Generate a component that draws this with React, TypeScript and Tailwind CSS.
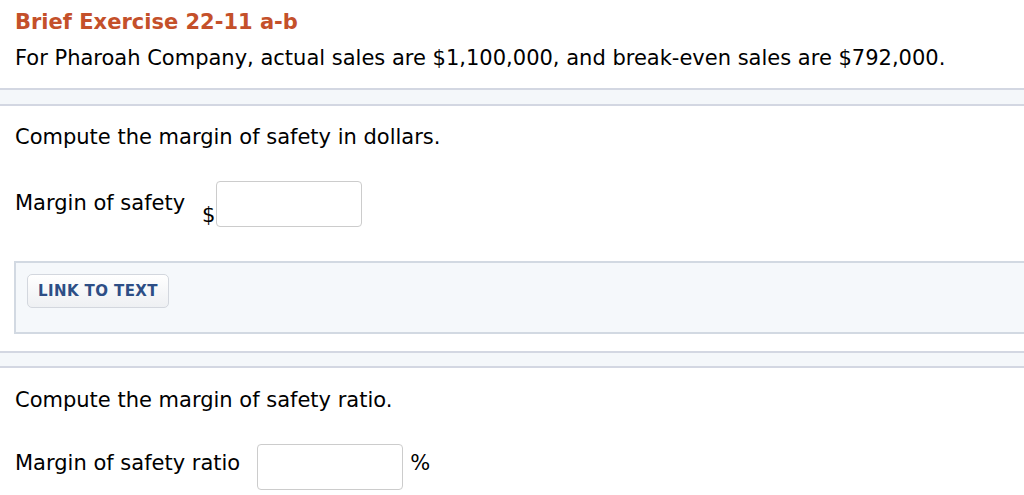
export default function App() {
  return (
    <div className="w-[1024px] h-[495px] overflow-hidden bg-white text-[21px] text-black" style={{ fontFamily: '"DejaVu Sans", Verdana, sans-serif' }}>
      <div className="px-[15px] pt-[9px]">
        <h1 className="font-bold text-[#c4502a] text-[21px] leading-[26px]">Brief Exercise 22-11 a-b</h1>
        <p className="mt-[10px] leading-[26px]">For Pharoah Company, actual sales are $1,100,000, and break-even sales are $792,000.</p>
      </div>
      <div className="mt-[17px] h-[18px] bg-[#f4f7fa] border-t-2 border-b-2 border-[#d3d7e2]"></div>
      <div className="px-[15px]">
        <p className="mt-[18px] leading-[26px]">Compute the margin of safety in dollars.</p>
        <div className="mt-[31px] flex items-start">
          <span className="mt-[9px] leading-[26px]">Margin of safety</span>
          <span className="ml-[17px] mt-[21px] leading-[26px]">$</span>
          <div className="ml-[1px] w-[146px] h-[46px] border border-[#cccccc] rounded-[4px] bg-white"></div>
        </div>
      </div>
      <div className="ml-[14px] mt-[33px] h-[73px] bg-[#f5f8fb] border-2 border-r-0 border-[#d2d9e2] pt-[11px] pl-[11px]">
        <button className="h-[34px] w-[142px] rounded-[5px] border border-[#d3d7de] bg-gradient-to-b from-white to-[#eef0f3] text-[#2d4e86] font-bold text-[15px] tracking-[0.4px]">LINK TO TEXT</button>
      </div>
      <div className="mt-[17px] h-[17px] bg-[#f4f7fa] border-t-2 border-b-2 border-[#d3d7e2]"></div>
      <div className="px-[15px]">
        <p className="mt-[19px] leading-[26px]">Compute the margin of safety ratio.</p>
        <div className="mt-[31px] flex items-start">
          <span className="mt-[6px] leading-[26px]">Margin of safety ratio</span>
          <div className="ml-[17px] w-[146px] h-[46px] border border-[#cccccc] rounded-[4px] bg-white"></div>
          <span className="ml-[7px] mt-[6px] leading-[26px]">%</span>
        </div>
      </div>
    </div>
  );
}
